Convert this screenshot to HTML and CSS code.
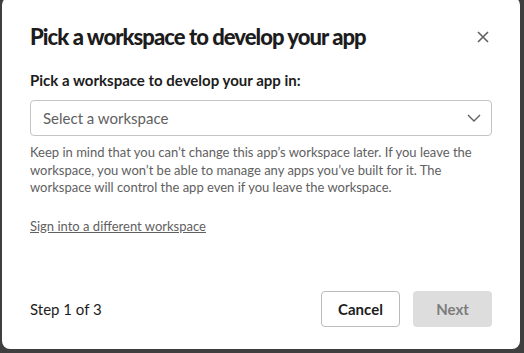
FILE: index.html
```
<!DOCTYPE html>
<html>
<head>
<meta charset="utf-8">
<link rel="stylesheet" href="styles.css">
</head>
<body>
<div class="modal">
  <div class="header">
    <h1 class="title">Pick a workspace to develop your app</h1>
    <button class="close" aria-label="Close">
      <svg width="12" height="12" viewBox="0 0 12 12"><path d="M1 1L11 11M11 1L1 11" stroke="#616061" stroke-width="1.6" fill="none"/></svg>
    </button>
  </div>
  <div class="body">
    <label class="label">Pick a workspace to develop your app in:</label>
    <div class="select">
      <span class="placeholder">Select a workspace</span>
      <svg class="chev" width="14" height="8" viewBox="0 0 14 8"><path d="M1 1L7 7L13 1" stroke="#616061" stroke-width="1.4" fill="none"/></svg>
    </div>
    <p class="help">Keep in mind that you can’t change this app’s workspace later. If you leave the workspace, you won’t be able to manage any apps you’ve built for it. The workspace will control the app even if you leave the workspace.</p>
    <a class="link" href="#">Sign into a different workspace</a>
  </div>
  <div class="footer">
    <span class="step">Step 1 of 3</span>
    <div class="actions">
      <button class="btn cancel">Cancel</button>
      <button class="btn next">Next</button>
    </div>
  </div>
</div>
</body>
</html>
```
FILE: styles.css
```
html, body {
  margin: 0;
  padding: 0;
  height: 100%;
}
body {
  background: #3f3f3f;
  font-family: Lato, "Noto Sans", sans-serif;
  color: #1d1c1d;
  overflow: hidden;
}
.modal {
  box-sizing: border-box;
  margin: -3px 0 0 2px;
  width: 518px;
  height: 352px;
  background: #fff;
  border-radius: 8px;
  display: flex;
  flex-direction: column;
  padding: 0 28px;
}
.header {
  display: flex;
  align-items: center;
  justify-content: space-between;
  padding-top: 25px;
  height: 30px;
}
.title {
  margin: 0;
  font-size: 22px;
  font-weight: 900;
  letter-spacing: -0.95px;
  line-height: 30px;
}
.close {
  border: 0;
  background: none;
  padding: 0;
  margin-right: 3px;
  width: 12px;
  height: 12px;
  display: flex;
}
.body {
  display: flex;
  flex-direction: column;
  padding-top: 17px;
}
.label {
  font-size: 15px;
  font-weight: 700;
  line-height: 22px;
}
.select {
  box-sizing: border-box;
  margin-top: 9px;
  height: 36px;
  border: 1px solid #c4c4c4;
  border-radius: 4px;
  display: flex;
  align-items: center;
  justify-content: space-between;
  padding: 0 10px 0 12px;
}
.placeholder {
  font-size: 15px;
  color: #616061;
}
.help {
  margin: 8px 0 0;
  font-size: 13px;
  line-height: 17.5px;
  color: #616061;
}
.link {
  margin-top: 20px;
  font-size: 13px;
  line-height: 18px;
  color: #616061;
  text-decoration: underline;
  align-self: flex-start;
}
.footer {
  margin-top: auto;
  display: flex;
  align-items: center;
  justify-content: space-between;
  padding-bottom: 22px;
}
.step {
  font-size: 15px;
  color: #1d1c1d;
}
.actions {
  display: flex;
  gap: 13px;
}
.btn {
  box-sizing: border-box;
  height: 36px;
  border-radius: 4px;
  font-family: Lato, "Noto Sans", sans-serif;
  font-size: 15px;
  font-weight: 700;
  padding: 0;
}
.cancel {
  width: 79px;
  background: #fff;
  border: 1px solid #bbbbbb;
  color: #1d1c1d;
}
.next {
  width: 79px;
  background: #dddddd;
  border: 0;
  color: #7c7c7c;
}
```
